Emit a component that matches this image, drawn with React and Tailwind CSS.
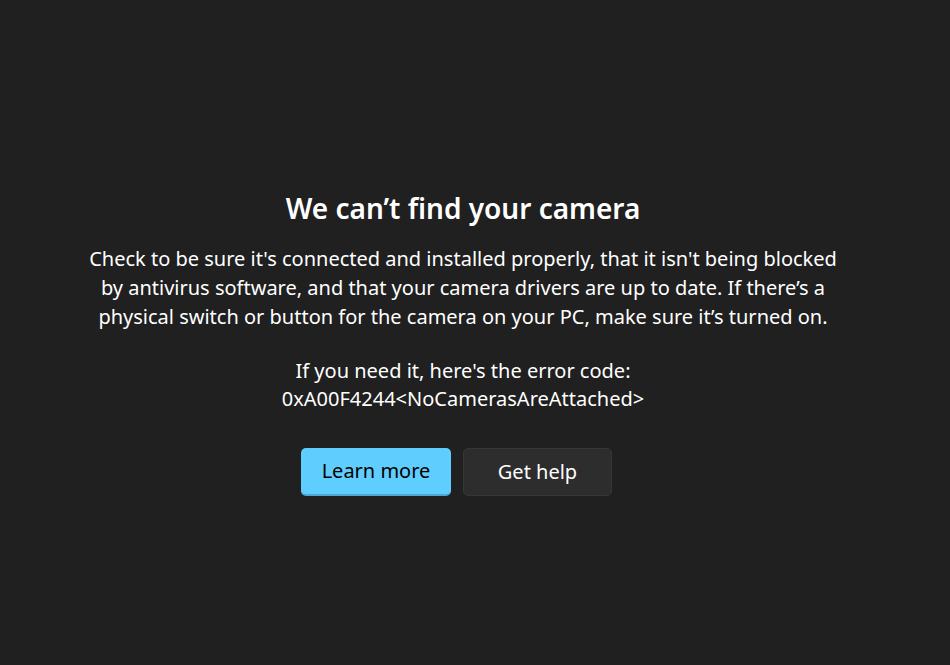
export default function App() {
  return (
    <div
      className="w-[950px] h-[665px] bg-[#202020] text-white flex flex-col items-center pt-[190px] pr-[24px]"
      style={{ fontFamily: "'Segoe UI', 'Noto Sans', 'Open Sans', sans-serif" }}
    >
      <h1 className="text-[28px] leading-[36px] font-semibold">We can’t find your camera</h1>
      <p className="mt-[18px] text-[20px] leading-[29px] text-center">
        Check to be sure it's connected and installed properly, that it isn't being blocked
        <br />
        by antivirus software, and that your camera drivers are up to date. If there’s a
        <br />
        physical switch or button for the camera on your PC, make sure it’s turned on.
      </p>
      <p className="mt-[26px] text-[20px] leading-[28px] text-center">
        If you need it, here's the error code:
        <br />
        0xA00F4244&lt;NoCamerasAreAttached&gt;
      </p>
      <div className="mt-[35px] mr-[13px] flex gap-3">
        <button className="w-[150px] h-[48px] rounded-[5px] bg-[#60cdff] text-black text-[20px] border-b-2 border-[#4fa8d2]">
          Learn more
        </button>
        <button className="w-[149px] h-[48px] rounded-[5px] bg-[#2d2d2d] text-white text-[20px] border border-[#363636]">
          Get help
        </button>
      </div>
    </div>
  );
}
